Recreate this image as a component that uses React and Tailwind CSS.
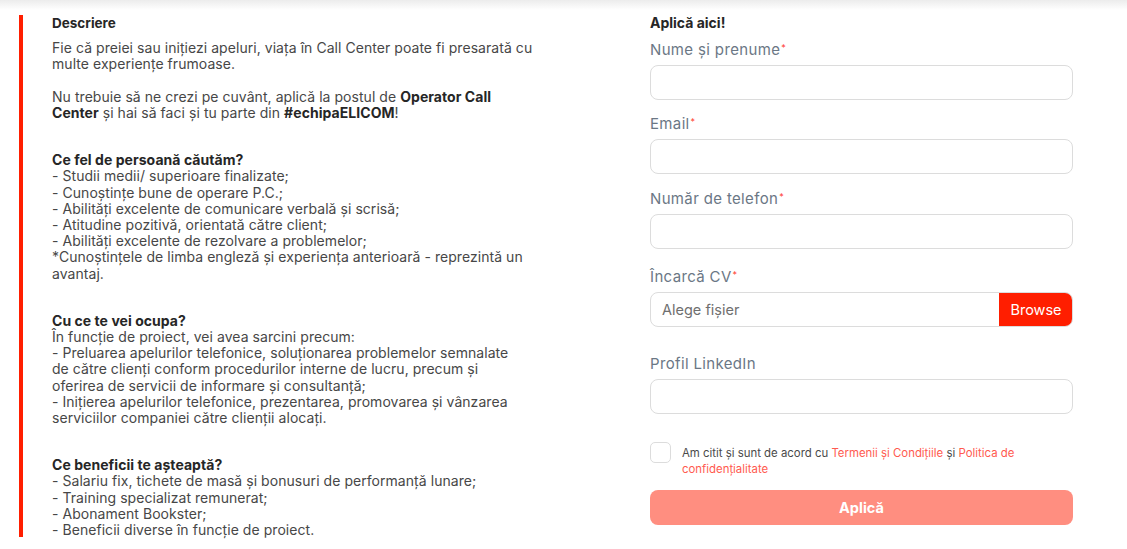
import React from "react";

const font = { fontFamily: "Inter, 'Noto Sans', sans-serif" };

function Req() {
  return <sup className="text-[#ff3b30] text-[9px] relative top-[-4px] ml-[1px]">*</sup>;
}

function Field({ label, req, gapTop }) {
  return (
    <div className={gapTop}>
      <div className="h-[20px] leading-[20px] text-[15px] tracking-[0.35px] text-[#6b7785] whitespace-nowrap">
        {label}
        {req && <Req />}
      </div>
      <div className="mt-[5px] h-[35px] rounded-[8px] border border-[#dcdcdc] bg-white" />
    </div>
  );
}

export default function App() {
  return (
    <div className="w-[1127px] h-[549px] overflow-hidden bg-white" style={font}>
      <div className="h-[10px] bg-gradient-to-b from-[#ececec] to-white" />
      <div className="flex pl-[19px] mt-[5px]">
        <div className="w-[631px] border-l-4 border-[#ff1e00] pl-[29px] h-[522px] text-[14px] tracking-[0.05px] leading-[16.2px] text-[#474747] whitespace-nowrap">
          <div className="font-bold text-[#262626] text-[13.5px] tracking-normal">Descriere</div>
          <div className="mt-[9px]">
            Fie că preiei sau inițiezi apeluri, viața în Call Center poate fi presarată cu
            <br />
            multe experiențe frumoase.
            <br />
            <br />
            Nu trebuie să ne crezi pe cuvânt, aplică la postul de <b className="text-[#262626]">Operator Call</b>
            <br />
            <b className="text-[#262626]">Center</b> și hai să faci și tu parte din <b className="text-[#262626]">#echipaELICOM</b>!
          </div>
          <div className="mt-[31px]">
            <div className="font-bold text-[#262626]">Ce fel de persoană căutăm?</div>
            <div>- Studii medii/ superioare finalizate;</div>
            <div>- Cunoștințe bune de operare P.C.;</div>
            <div>- Abilități excelente de comunicare verbală și scrisă;</div>
            <div>- Atitudine pozitivă, orientată către client;</div>
            <div>- Abilități excelente de rezolvare a problemelor;</div>
            <div>*Cunoștințele de limba engleză și experiența anterioară - reprezintă un</div>
            <div>avantaj.</div>
          </div>
          <div className="mt-[31px]">
            <div className="font-bold text-[#262626]">Cu ce te vei ocupa?</div>
            <div>În funcție de proiect, vei avea sarcini precum:</div>
            <div>- Preluarea apelurilor telefonice, soluționarea problemelor semnalate</div>
            <div>de către clienți conform procedurilor interne de lucru, precum și</div>
            <div>oferirea de servicii de informare și consultanță;</div>
            <div>- Inițierea apelurilor telefonice, prezentarea, promovarea și vânzarea</div>
            <div>serviciilor companiei către clienții alocați.</div>
          </div>
          <div className="mt-[31px]">
            <div className="font-bold text-[#262626]">Ce beneficii te așteaptă?</div>
            <div>- Salariu fix, tichete de masă și bonusuri de performanță lunare;</div>
            <div>- Training specializat remunerat;</div>
            <div>- Abonament Bookster;</div>
            <div>- Beneficii diverse în funcție de proiect.</div>
          </div>
        </div>

        <div className="w-[423px]">
          <div className="font-bold text-[14px] leading-[16px] text-[#262626]">Aplică aici!</div>
          <Field label="Nume și prenume" req gapTop="mt-[9px]" />
          <Field label="Email" req gapTop="mt-[14px]" />
          <Field label="Număr de telefon" req gapTop="mt-[15px]" />
          <div className="mt-[18px]">
            <div className="h-[20px] leading-[20px] text-[15px] tracking-[0.35px] text-[#6b7785] whitespace-nowrap">
              Încarcă CV
              <Req />
            </div>
            <div className="mt-[5px] h-[35px] rounded-[8px] border border-[#dcdcdc] bg-white flex overflow-hidden">
              <div className="flex-1 flex items-center pl-[11px] text-[14.5px] text-[#6f6f6f]">Alege fișier</div>
              <div className="w-[74px] -my-px -mr-px bg-[#ff1e00] text-white text-[14.5px] flex items-center justify-center rounded-r-[8px]">
                Browse
              </div>
            </div>
          </div>
          <Field label="Profil LinkedIn" gapTop="mt-[27px]" />
          <div className="mt-[28px] flex items-start">
            <div className="w-[21px] h-[21px] rounded-[5px] border border-[#dcdcdc] shrink-0" />
            <div className="ml-[11px] mt-[3px] text-[11.4px] leading-[16px] text-[#4a4a4a] whitespace-nowrap">
              Am citit și sunt de acord cu <span className="text-[#ff5a4f]">Termenii și Condițiile</span> și{" "}
              <span className="text-[#ff5a4f]">Politica de</span>
              <br />
              <span className="text-[#ff5a4f]">confidențialitate</span>
            </div>
          </div>
          <div className="mt-[13px] h-[35px] rounded-[8px] bg-[#ff8e80] text-white font-bold text-[14.5px] flex items-center justify-center">
            Aplică
          </div>
        </div>
      </div>
    </div>
  );
}
